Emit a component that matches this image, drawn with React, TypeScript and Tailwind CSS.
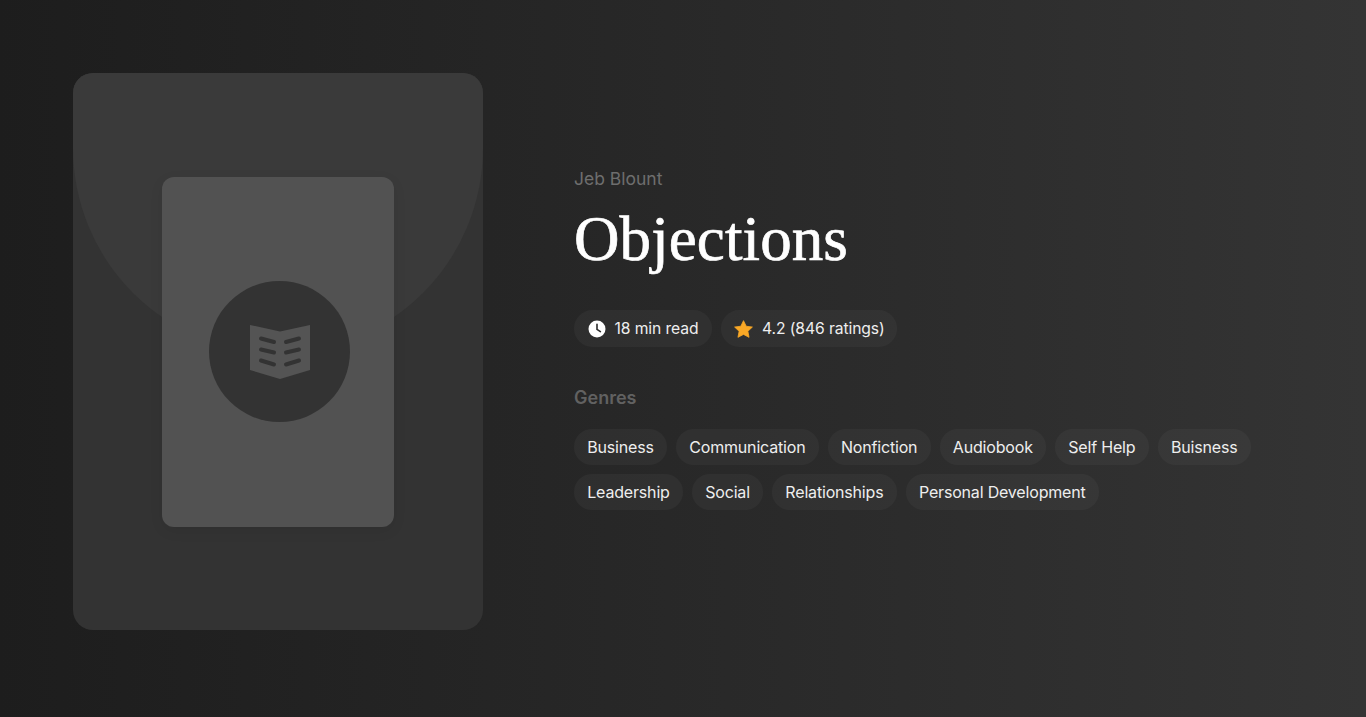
const row1 = ["Business", "Communication", "Nonfiction", "Audiobook", "Self Help", "Buisness"];
const row2 = ["Leadership", "Social", "Relationships", "Personal Development"];

function Chip({ label }: { label: string }) {
  return (
    <span className="h-9 flex items-center px-[13.25px] rounded-full bg-white/[0.035] text-[16px] text-[#eeeeee] tracking-[-0.18px]">
      {label}
    </span>
  );
}

function BookIcon() {
  return (
    <svg width="60" height="54" viewBox="0 0 60 54" fill="none">
      <path d="M0 0 L30 6.5 L60 0 V45 L30 54 L0 45 Z" fill="#545454" />
      <g stroke="#333333" strokeWidth="4" strokeLinecap="round">
        <path d="M11 13.5 L24 17" />
        <path d="M11 24.5 L24 27.5" />
        <path d="M11 35.5 L24 39.5" />
        <path d="M49 13.5 L36 17" />
        <path d="M49 24.5 L36 27.5" />
        <path d="M49 35.5 L36 39.5" />
      </g>
    </svg>
  );
}

function ClockIcon() {
  return (
    <svg width="18" height="18" viewBox="0 0 18 18">
      <circle cx="9" cy="9" r="8.5" fill="#ffffff" />
      <path d="M9 4.2 V9.4 L12.4 11.6" stroke="#2b2b2b" strokeWidth="1.6" fill="none" strokeLinecap="round" strokeLinejoin="round" />
    </svg>
  );
}

function StarIcon() {
  return (
    <svg width="19" height="18" viewBox="0 0 24 23">
      <path d="M12 .8 L15.5 8 L23.4 9 L17.6 14.4 L19.1 22.2 L12 18.4 L4.9 22.2 L6.4 14.4 L.6 9 L8.5 8 Z" fill="#f9a826" stroke="#f9a826" strokeWidth="1" strokeLinejoin="round" />
    </svg>
  );
}

export default function App() {
  return (
    <div className="h-[717px] w-[1366px] overflow-hidden flex items-start gap-[91px] pl-[73px] pt-[73px] bg-gradient-to-r from-[#1d1d1d] to-[#343434] font-['Inter','Liberation_Sans',sans-serif]">
      {/* cover */}
      <div className="relative w-[410px] h-[557px] shrink-0 rounded-[20px] overflow-hidden bg-[#333333] flex items-center justify-center">
        <div className="absolute top-0 left-0 w-full h-[280px] bg-[#3a3a3a] rounded-b-[205px]" />
        <div className="relative w-[232px] h-[350px] rounded-xl bg-[#525252] shadow-[0_4px_14px_rgba(0,0,0,0.07)] flex items-center justify-center">
          <div className="ml-[3px] w-[141px] h-[141px] rounded-full bg-[#333333] flex items-center justify-center">
            <BookIcon />
          </div>
        </div>
      </div>

      {/* details */}
      <div className="flex flex-col mt-[94px]">
        <div className="text-[17.5px] leading-6 text-[#6e6e6e]">Jeb Blount</div>
        <h1 className="mt-[12px] text-[63px] leading-[72px] font-normal text-white tracking-[0.1px] [-webkit-text-stroke:0.7px_white] font-['Liberation_Serif',serif]">Objections</h1>
        <div className="mt-[35px] flex gap-[9px]">
          <span className="h-[37px] flex items-center gap-[9px] pl-[13.5px] pr-[13.5px] rounded-full bg-white/[0.035] text-[15.7px] text-[#eeeeee] tracking-[-0.1px]">
            <ClockIcon />
            18 min read
          </span>
          <span className="h-[37px] flex items-center gap-[9px] pl-[13px] pr-[12.5px] rounded-full bg-white/[0.035] text-[15.7px] text-[#eeeeee] tracking-[-0.1px]">
            <StarIcon />
            4.2 (846 ratings)
          </span>
        </div>
        <div className="mt-[39px] text-[18px] leading-6 font-semibold text-[#616161]">Genres</div>
        <div className="mt-[19px] flex flex-col gap-[9px]">
          <div className="flex gap-[9px]">
            {row1.map((g) => <Chip key={g} label={g} />)}
          </div>
          <div className="flex gap-[9px]">
            {row2.map((g) => <Chip key={g} label={g} />)}
          </div>
        </div>
      </div>
    </div>
  );
}
